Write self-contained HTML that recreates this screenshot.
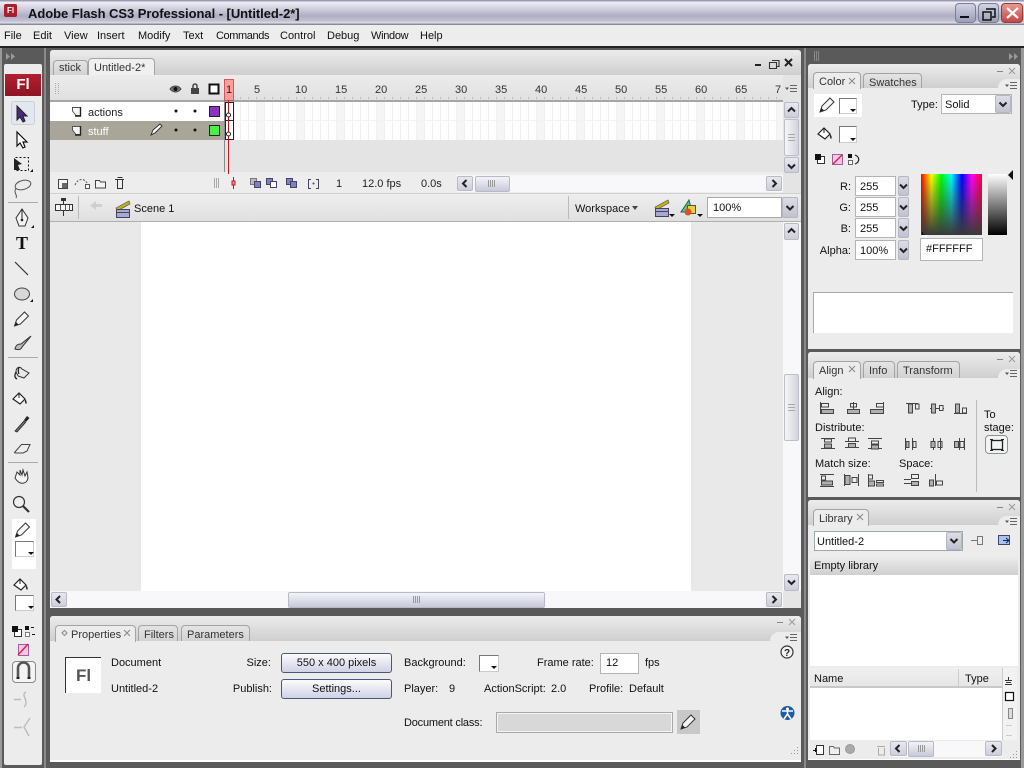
<!DOCTYPE html>
<html><head><meta charset="utf-8"><title>Adobe Flash CS3 Professional</title>
<style>
html,body{margin:0;padding:0;background:#5a5a5a;width:1024px;height:768px;overflow:hidden}
body{position:relative;font:11px "Liberation Sans",sans-serif;color:#111}
div{position:absolute;box-sizing:border-box}
.t{position:absolute;white-space:nowrap;line-height:14px;height:14px;margin-top:1px}
.r{text-align:right}
.pn{background:#ececec}
.hd{background:linear-gradient(#ececec,#cfcfcf)}
.tab{border:1px solid #a4a4a4;border-bottom:0;border-radius:4px 4px 0 0;background:linear-gradient(#e4e4e4,#d2d2d2);line-height:18px;padding-left:5px;white-space:nowrap;color:#333}
.tab.a{background:#ececec;color:#333}
.in{background:#fff;border:1px solid #b4b4b4}
.dd{background:linear-gradient(#dcdde6,#c0c2d0);border:1px solid #b4b6c2;border-radius:2px}
.sw{background:#fff;border-top:1px solid #777;border-left:1px solid #777;border-right:1px solid #ccc;border-bottom:1px solid #ccc}
.btn{background:linear-gradient(#fbfbfe,#cfd2e4);border:1px solid #47597a;border-radius:3px;text-align:center;line-height:18px}
.sb{background:linear-gradient(#e8e8f0,#ccced9);border:1px solid #b8bac6;border-radius:2px}
.th{background:linear-gradient(#f4f4f8,#c6c9d8);border:1px solid #b8bac8;border-radius:2px}
.tv{background:linear-gradient(90deg,#f6f6f9,#d2d4de);border:1px solid #bcbec9;border-radius:2px}
.tr{background:#f8f8fb}
svg{position:absolute;left:0;top:0}
</style></head><body>

<!-- title & menu -->
<div style="left:0;top:0;width:1024px;height:25px;background:linear-gradient(#9a9ab2 0,#9a9ab2 1px,#eeeef4 2px,#dcdce6 6px,#aeaec4 16px,#c2c2d2 21px,#e0e0ea 23px,#8a8a96 24px)"></div>
<div style="left:4px;top:4px;width:13px;height:13px;background:#a8202c;border-radius:2px;color:#fff;font:bold 8px/13px 'Liberation Sans',sans-serif;text-align:center">Fl</div>
<span class="t" style="left:28px;top:6px;font:bold 13px/14px 'Liberation Sans',sans-serif;letter-spacing:-.05px;color:#111">Adobe Flash CS3 Professional - [Untitled-2*]</span>
<div style="left:0;top:25px;width:1024px;height:21px;background:#ededed"></div>
<div style="left:0;top:46px;width:1024px;height:2px;background:#222"></div>
<span class="t" style="left:4px;top:28px">File</span>
<span class="t" style="left:33px;top:28px">Edit</span>
<span class="t" style="left:64px;top:28px">View</span>
<span class="t" style="left:97px;top:28px">Insert</span>
<span class="t" style="left:138px;top:28px">Modify</span>
<span class="t" style="left:183px;top:28px">Text</span>
<span class="t" style="left:216px;top:28px;letter-spacing:-.4px">Commands</span>
<span class="t" style="left:280px;top:28px">Control</span>
<span class="t" style="left:327px;top:28px">Debug</span>
<span class="t" style="left:371px;top:28px;letter-spacing:-.3px">Window</span>
<span class="t" style="left:420px;top:28px">Help</span>

<!-- window buttons -->
<div style="left:955px;top:3px;width:21px;height:20px;border:1px solid #7a7e98;border-radius:4px;background:linear-gradient(#d0d3e2,#9a9eb8)"></div>
<div style="left:978px;top:3px;width:21px;height:20px;border:1px solid #7a7e98;border-radius:4px;background:linear-gradient(#d0d3e2,#9a9eb8)"></div>
<div style="left:1001px;top:3px;width:22px;height:20px;border:1px solid #8a4040;border-radius:4px;background:linear-gradient(#e89a90,#c04848)"></div>

<!-- left dark strips -->
<div style="left:0;top:48px;width:2px;height:720px;background:#9a9a9a"></div>
<div style="left:44px;top:48px;width:2px;height:720px;background:#8a8a8a"></div>
<div style="left:804px;top:48px;width:2px;height:720px;background:#8a8a8a"></div>
<div style="left:1021px;top:48px;width:3px;height:720px;background:#9a9a9a"></div>

<!-- tools panel -->
<div style="left:4px;top:64px;width:38px;height:701px;background:#ececec;border-radius:2px"></div>
<div style="left:5px;top:74px;width:36px;height:22px;background:linear-gradient(#b3202f,#8e1424);color:#fff;font:bold 15px/22px 'Liberation Sans',sans-serif;text-align:center">Fl</div>
<div style="left:11px;top:101px;width:24px;height:24px;background:#e2e8f0;border:1px solid #c6d0dc;border-radius:3px"></div>
<div style="left:8px;top:202px;width:30px;height:1px;background:#aaa"></div>
<div style="left:8px;top:357px;width:30px;height:1px;background:#aaa"></div>
<div style="left:8px;top:462px;width:30px;height:1px;background:#aaa"></div>
<div style="left:12px;top:519px;width:24px;height:50px;background:#fff"></div>
<div class="sw" style="left:15px;top:541px;width:19px;height:16px"></div>
<div class="sw" style="left:15px;top:595px;width:19px;height:16px"></div>
<div style="left:12px;top:661px;width:24px;height:22px;border:1px solid #8a8a8a;border-radius:4px;background:#f4f4f4"></div>

<!-- timeline panel -->
<div style="left:50px;top:50px;width:751px;height:558px;background:#e4e4e4;border-radius:3px 3px 0 0"></div>
<div class="hd" style="left:50px;top:50px;width:751px;height:25px;border-radius:3px 3px 0 0"></div>
<div class="tab" style="left:53px;top:60px;width:35px;height:15px;line-height:15px">stick</div>
<div class="tab a" style="left:88px;top:58px;width:67px;height:18px;background:#f0f0f0;line-height:19px">Untitled-2*</div>
<div style="left:50px;top:75px;width:733px;height:25px;background:linear-gradient(#ececec,#e0e0e0)"></div>
<div style="left:50px;top:100px;width:733px;height:2px;background:#a6a6a6"></div>
<div style="left:50px;top:102px;width:174px;height:19px;background:#fff"></div>
<div style="left:50px;top:121px;width:174px;height:19px;background:#a9a699"></div>
<span class="t" style="left:88px;top:105px;color:#222">actions</span>
<span class="t" style="left:88px;top:124px;color:#fff">stuff</span>
<div style="left:233px;top:102px;width:550px;height:38px;background:repeating-linear-gradient(90deg,#f5f5f5 0,#f5f5f5 8px,#fff 8px,#fff 40px) 24px 0;"></div>
<div style="left:233px;top:102px;width:550px;height:38px;background:repeating-linear-gradient(90deg,transparent 0,transparent 7px,#f0f0f0 7px,#f0f0f0 8px)"></div>
<div style="left:233px;top:120px;width:550px;height:1px;background:#f2f2f2"></div>
<div style="left:233px;top:97px;width:550px;height:2px;background:repeating-linear-gradient(90deg,transparent 0,transparent 7px,#bdbdbd 7px,#bdbdbd 8px)"></div>
<div style="left:225px;top:102px;width:9px;height:19px;border:1px solid #222;background:#fff"></div>
<div style="left:225px;top:120px;width:9px;height:20px;border:1px solid #222;background:#fff"></div>
<div style="left:224px;top:100px;width:1px;height:93px;background:#8a8a8a"></div>
<div style="left:50px;top:172px;width:733px;height:21px;background:#ededed"></div>
<div style="left:224px;top:79px;width:10px;height:22px;background:#ff9c9c;border:1px solid #d05858;color:#222;text-align:center;line-height:21px;font-size:11px">1</div>
<div style="left:228px;top:100px;width:1px;height:74px;background:#c01820"></div>
<span class="t" style="left:254px;top:82px;color:#333">5</span>
<span class="t" style="left:295px;top:82px;color:#333">10</span>
<span class="t" style="left:335px;top:82px;color:#333">15</span>
<span class="t" style="left:375px;top:82px;color:#333">20</span>
<span class="t" style="left:415px;top:82px;color:#333">25</span>
<span class="t" style="left:455px;top:82px;color:#333">30</span>
<span class="t" style="left:495px;top:82px;color:#333">35</span>
<span class="t" style="left:535px;top:82px;color:#333">40</span>
<span class="t" style="left:575px;top:82px;color:#333">45</span>
<span class="t" style="left:615px;top:82px;color:#333">50</span>
<span class="t" style="left:655px;top:82px;color:#333">55</span>
<span class="t" style="left:695px;top:82px;color:#333">60</span>
<span class="t" style="left:735px;top:82px;color:#333">65</span>
<span class="t" style="left:775px;top:82px;color:#333">7</span>
<span class="t" style="left:336px;top:176px;color:#222">1</span>
<span class="t" style="left:362px;top:176px;color:#222">12.0 fps</span>
<span class="t" style="left:421px;top:176px;color:#222">0.0s</span>

<!-- timeline scrollbars -->
<div class="tr" style="left:783px;top:100px;width:17px;height:73px;background:#e5e5e5"></div>
<div class="sb" style="left:784px;top:102px;width:15px;height:16px"></div>
<div class="tv" style="left:784px;top:119px;width:15px;height:37px"></div>
<div class="sb" style="left:784px;top:157px;width:15px;height:16px"></div>
<div class="tr" style="left:457px;top:175px;width:326px;height:17px"></div>
<div class="sb" style="left:457px;top:176px;width:16px;height:15px"></div>
<div class="th" style="left:475px;top:176px;width:35px;height:16px"></div>
<div class="sb" style="left:766px;top:176px;width:16px;height:15px"></div>

<!-- edit bar -->
<div style="left:50px;top:193px;width:751px;height:29px;background:linear-gradient(#eeeeee,#e0e0e0);border-bottom:1px solid #b0b0b0;border-top:1px solid #d0d0d0"></div>
<div style="left:78px;top:196px;width:1px;height:23px;background:#bbb"></div>
<div style="left:568px;top:196px;width:1px;height:23px;background:#bbb"></div>
<span class="t" style="left:134px;top:201px">Scene 1</span>
<span class="t" style="left:575px;top:201px">Workspace</span>
<div class="in" style="left:707px;top:197px;width:75px;height:21px;border-color:#aaa"></div>
<span class="t" style="left:713px;top:200px">100%</span>
<div class="dd" style="left:782px;top:197px;width:16px;height:21px"></div>

<!-- stage -->
<div style="left:50px;top:222px;width:733px;height:369px;background:#e9e9e9"></div>
<div style="left:141px;top:222px;width:550px;height:369px;background:#fff"></div>
<div class="tr" style="left:783px;top:222px;width:18px;height:369px"></div>
<div class="sb" style="left:784px;top:223px;width:15px;height:17px"></div>
<div class="tv" style="left:784px;top:374px;width:15px;height:67px"></div>
<div class="sb" style="left:784px;top:574px;width:15px;height:17px"></div>
<div class="tr" style="left:50px;top:591px;width:733px;height:17px"></div>
<div style="left:783px;top:591px;width:18px;height:17px;background:#e5e5e5"></div>
<div class="sb" style="left:51px;top:592px;width:16px;height:15px"></div>
<div class="th" style="left:288px;top:592px;width:257px;height:16px"></div>
<div class="sb" style="left:766px;top:592px;width:16px;height:15px"></div>

<!-- properties -->
<div class="pn" style="left:50px;top:616px;width:751px;height:146px;border-radius:3px 3px 0 0;border-bottom:2px solid #fff"></div>
<div class="hd" style="left:50px;top:616px;width:751px;height:25px;border-radius:3px 3px 0 0"></div>
<div style="left:770px;top:632px;width:31px;height:9px;background:#ececec;border-radius:9px 0 0 0"></div>
<div class="tab a" style="left:55px;top:625px;width:81px;height:17px;padding-left:15px">Properties</div>
<div class="tab" style="left:138px;top:625px;width:40px;height:16px">Filters</div>
<div class="tab" style="left:181px;top:625px;width:69px;height:16px">Parameters</div>
<div style="left:65px;top:657px;width:36px;height:36px;background:#fff;border-top:1px solid #333;border-left:1px solid #333;color:#555;font:bold 17px/36px 'Liberation Sans',sans-serif;text-align:center">Fl</div>
<span class="t" style="left:111px;top:655px">Document</span>
<span class="t" style="left:111px;top:681px">Untitled-2</span>
<span class="t r" style="left:211px;width:60px;top:655px">Size:</span>
<span class="t r" style="left:211px;width:61px;top:681px">Publish:</span>
<div class="btn" style="left:281px;top:653px;width:111px;height:20px">550 x 400 pixels</div>
<div class="btn" style="left:281px;top:679px;width:111px;height:20px">Settings...</div>
<span class="t" style="left:404px;top:655px">Background:</span>
<div class="sw" style="left:479px;top:655px;width:20px;height:17px"></div>
<span class="t" style="left:537px;top:655px">Frame rate:</span>
<div class="in" style="left:600px;top:653px;width:39px;height:21px"></div>
<span class="t" style="left:606px;top:655px">12</span>
<span class="t" style="left:645px;top:655px">fps</span>
<span class="t" style="left:404px;top:681px">Player:</span>
<span class="t" style="left:449px;top:681px">9</span>
<span class="t" style="left:484px;top:681px">ActionScript:</span>
<span class="t" style="left:551px;top:681px">2.0</span>
<span class="t" style="left:589px;top:681px">Profile:</span>
<span class="t" style="left:629px;top:681px">Default</span>
<span class="t" style="left:404px;top:715px;letter-spacing:-.2px">Document class:</span>
<div style="left:496px;top:712px;width:177px;height:21px;background:#d8d8d8;border:1px solid #a8a8a8;box-shadow:inset 0 0 0 1px #f4f4f4"></div>
<div style="left:677px;top:710px;width:23px;height:24px;background:#c8c8c8"></div>

<!-- right column -->
<!-- color -->
<div class="pn" style="left:808px;top:64px;width:212px;height:285px;border-radius:3px 3px 0 0"></div>
<div class="hd" style="left:808px;top:64px;width:212px;height:24px;border-radius:3px 3px 0 0"></div>
<div style="left:998px;top:79px;width:22px;height:9px;background:#ececec;border-radius:9px 0 0 0"></div>
<div class="tab a" style="left:813px;top:72px;width:48px;height:17px;line-height:19px">Color</div>
<div class="tab" style="left:863px;top:73px;width:59px;height:15px">Swatches</div>
<div style="left:814px;top:94px;width:48px;height:23px;background:#fff"></div>
<div class="sw" style="left:839px;top:98px;width:18px;height:16px"></div>
<div class="sw" style="left:839px;top:126px;width:18px;height:17px"></div>
<span class="t" style="left:911px;top:97px">Type:</span>
<div class="in" style="left:941px;top:94px;width:71px;height:20px"></div>
<span class="t" style="left:945px;top:97px">Solid</span>
<div class="dd" style="left:995px;top:95px;width:16px;height:18px"></div>
<span class="t r" style="left:821px;width:30px;top:179px">R:</span>
<span class="t r" style="left:821px;width:30px;top:200px">G:</span>
<span class="t r" style="left:821px;width:30px;top:221px">B:</span>
<span class="t r" style="left:811px;width:40px;top:243px">Alpha:</span>
<div class="in" style="left:855px;top:176px;width:41px;height:20px"></div>
<div class="in" style="left:855px;top:197px;width:41px;height:20px"></div>
<div class="in" style="left:855px;top:218px;width:41px;height:20px"></div>
<div class="in" style="left:855px;top:240px;width:41px;height:20px"></div>
<span class="t" style="left:860px;top:179px">255</span>
<span class="t" style="left:860px;top:200px">255</span>
<span class="t" style="left:860px;top:221px">255</span>
<span class="t" style="left:860px;top:243px">100%</span>
<div class="dd" style="left:898px;top:176px;width:11px;height:20px"></div>
<div class="dd" style="left:898px;top:197px;width:11px;height:20px"></div>
<div class="dd" style="left:898px;top:218px;width:11px;height:20px"></div>
<div class="dd" style="left:898px;top:240px;width:11px;height:20px"></div>
<div style="left:921px;top:174px;width:61px;height:61px;background:linear-gradient(transparent,#3a3a3a),linear-gradient(90deg,#f00,#ff0 17%,#0f0 33%,#0ff 50%,#00f 67%,#f0f 83%,#f03)"></div>
<div style="left:988px;top:174px;width:19px;height:61px;background:linear-gradient(#fff,#000)"></div>
<div class="in" style="left:920px;top:238px;width:63px;height:23px"></div>
<span class="t" style="left:926px;top:241px">#FFFFFF</span>
<div style="left:813px;top:292px;width:200px;height:41px;background:#fff;border-top:1px solid #aaa;border-left:1px solid #aaa"></div>

<!-- align -->
<div class="pn" style="left:808px;top:352px;width:212px;height:145px;border-radius:3px 3px 0 0"></div>
<div class="hd" style="left:808px;top:352px;width:212px;height:26px;border-radius:3px 3px 0 0"></div>
<div style="left:998px;top:369px;width:22px;height:9px;background:#ececec;border-radius:9px 0 0 0"></div>
<div class="tab a" style="left:813px;top:361px;width:48px;height:18px;line-height:19px">Align</div>
<div class="tab" style="left:863px;top:361px;width:32px;height:17px;line-height:19px">Info</div>
<div class="tab" style="left:897px;top:361px;width:63px;height:17px;line-height:19px">Transform</div>
<span class="t" style="left:815px;top:384px">Align:</span>
<span class="t" style="left:815px;top:420px">Distribute:</span>
<span class="t" style="left:815px;top:456px">Match size:</span>
<span class="t" style="left:899px;top:456px">Space:</span>
<span class="t" style="left:984px;top:407px">To</span>
<span class="t" style="left:984px;top:420px">stage:</span>
<div style="left:976px;top:400px;width:1px;height:92px;background:#bbb"></div>
<div style="left:985px;top:435px;width:23px;height:19px;background:#f4f4f4;border:1px solid #8a8f9c;border-radius:4px"></div>

<!-- library -->
<div class="pn" style="left:808px;top:500px;width:212px;height:260px;border-radius:3px 3px 0 0;border-bottom:1px solid #fff"></div>
<div class="hd" style="left:808px;top:500px;width:212px;height:25px;border-radius:3px 3px 0 0"></div>
<div style="left:998px;top:516px;width:22px;height:9px;background:#ececec;border-radius:9px 0 0 0"></div>
<div class="tab a" style="left:813px;top:509px;width:56px;height:17px">Library</div>
<div class="in" style="left:814px;top:531px;width:149px;height:20px;border-color:#9aa"></div>
<span class="t" style="left:817px;top:534px">Untitled-2</span>
<div class="dd" style="left:946px;top:532px;width:16px;height:18px"></div>
<div style="left:810px;top:555px;width:208px;height:20px;background:linear-gradient(#efefef,#cfcfcf)"></div>
<span class="t" style="left:814px;top:558px">Empty library</span>
<div style="left:810px;top:575px;width:208px;height:91px;background:#fff"></div>
<div style="left:810px;top:668px;width:192px;height:20px;background:linear-gradient(#f0f0f0,#e6e6e6);border-bottom:2px solid #c8c8c8"></div>
<span class="t" style="left:814px;top:671px">Name</span>
<div style="left:958px;top:669px;width:1px;height:17px;background:#ccc"></div>
<span class="t" style="left:965px;top:671px">Type</span>
<div style="left:810px;top:688px;width:192px;height:52px;background:#fff"></div>
<div style="left:1002px;top:668px;width:15px;height:72px;background:#f2f2f2;border-left:1px solid #ccc"></div>
<div class="tr" style="left:890px;top:741px;width:112px;height:16px"></div>
<div class="sb" style="left:890px;top:741px;width:17px;height:15px"></div>
<div class="th" style="left:908px;top:741px;width:26px;height:16px"></div>
<div class="sb" style="left:985px;top:741px;width:17px;height:15px"></div>

<!-- all icons -->
<svg width="1024" height="768" viewBox="0 0 1024 768">
<defs>
<path id="cd" d="M-3.5 -1.5 L0 2 L3.5 -1.5" fill="none" stroke="#222" stroke-width="2"/>
<path id="cu" d="M-3.5 1.5 L0 -2 L3.5 1.5" fill="none" stroke="#222" stroke-width="2"/>
<path id="cl" d="M1.5 -3.5 L-2 0 L1.5 3.5" fill="none" stroke="#222" stroke-width="2"/>
<path id="cr" d="M-1.5 -3.5 L2 0 L-1.5 3.5" fill="none" stroke="#222" stroke-width="2"/>
<path id="tri" d="M-3 -1 H3 L0 2Z" fill="#111"/>
<g id="pen"><path d="M-7 7 L-5 1 L3 -7 L7 -3 L-1 5Z" fill="#f4f4f4" stroke="#333"/><path d="M-7 7 L-5.500 3 L-3 5.500Z" fill="#222"/></g>
<g id="bucket"><path d="M-7 0 L-1 -6 L5 0 L0 5Z" fill="#fff" stroke="#222" stroke-width="1.2"/><path d="M-1 -6 L-1 -1" stroke="#222"/><path d="M5 0 C7 2 7 4 6 5 C5 4 4.5 2 5 0Z" fill="#222"/></g>
<g id="menu"><path d="M0 .5h7M0 3.500h7M0 6.500h7" stroke="#666"/><path d="M-5 2.500h4l-2 2.500z" fill="#555"/></g>
</defs>

<!-- window glyphs -->
<path d="M960 17h9" stroke="#111" stroke-width="2"/>
<path d="M986 9h9v8h-3M983 12h8v8h-8z" fill="none" stroke="#111" stroke-width="1.5"/>
<path d="M1007 8 L1018 18M1018 8 L1007 18" stroke="#fff" stroke-width="2.2"/>

<!-- dark bar grips -->
<path d="M6 53 l4 3.500 -4 3.500zM11 53 l4 3.500 -4 3.500z" fill="#999"/>
<path d="M1009 53 l4 3.500 -4 3.500zM1014 53 l4 3.500 -4 3.500z" fill="#999"/>
<path d="M814.500 51v10M816.500 51v10M818.500 51v10" stroke="#888"/>

<!-- tools -->
<path d="M17 106 L17 120 L20 117 L23 122 L25 121 L23 116 L27 116Z" fill="#4a2a7a" stroke="#222"/>
<path d="M17 132 L17 146 L20 143 L23 148 L25 147 L23 142 L27 142Z" fill="#fff" stroke="#111" stroke-width="1.2"/>
<path d="M15.500 157.500h13v13h-13z" fill="none" stroke="#111" stroke-dasharray="2 2"/><path d="M14 158 L22 164 L18 165 L20 170 L14 170Z" fill="#222"/><path d="M30 172h3v-3z" fill="#111"/>
<ellipse cx="23" cy="185" rx="8" ry="4.500" fill="none" stroke="#555" stroke-width="1" transform="rotate(-15 23 185)"/><path d="M16 188 C13 193 18 195 16 198" fill="none" stroke="#555"/>
<path d="M22 209 L28 218 L25 226 H19 L16 218Z" fill="#f4f4f4" stroke="#333"/><path d="M22 209V220" stroke="#222"/><circle cx="22" cy="220" r="1.300" fill="#222"/><path d="M31 228h3v-3z" fill="#111"/>
<text x="22" y="249" font-family="Liberation Serif,serif" font-weight="bold" font-size="18" text-anchor="middle" fill="#111">T</text>
<path d="M15 262 L28 275" stroke="#333" stroke-width="1.200"/>
<ellipse cx="22" cy="294" rx="7.500" ry="6" fill="#d8d8d8" stroke="#444"/><path d="M30 302h3v-3z" fill="#111"/>
<use href="#pen" x="21.500" y="319"/>
<path d="M15 349 C16 344 19 344 21 344 L31 336 L22 347 C21 350 18 350 15 349Z" fill="#bbb" stroke="#333"/>
<path d="M16 372 C16 367 20 366 22 369 L29 373 L24 378 L18 376Z" fill="#e8e8e8" stroke="#333"/><path d="M16 372 C14 376 15 378 17 379 M19 367 C18 370 18 372 19 374" fill="none" stroke="#222" stroke-width="1.300"/>
<use href="#bucket" x="20" y="399"/>
<path d="M15 431 L24 421 L25.500 422.500 L17 432Z" fill="#777" stroke="#222" stroke-width=".8"/><path d="M24 420 L27 416 L29.500 418 L26 422Z" fill="#222"/>
<path d="M14.500 452.500 L21.500 444.500 H30 L27 451 L23 453 H15Z" fill="#eee" stroke="#444"/>
<path d="M15 478 L17 472 L20 475 L20 470 L22 475 L23 470 L25 476 L27 472 L28 478 C27 484 20 486 15 478Z" fill="#f4f4f4" stroke="#333"/>
<circle cx="19" cy="502" r="5.500" fill="#eee" stroke="#333" stroke-width="1.200"/><path d="M23 506 L29 512" stroke="#333" stroke-width="2.200"/>
<use href="#pen" x="22.500" y="530"/>
<use href="#tri" x="31" y="553"/>
<use href="#bucket" x="21" y="585"/>
<use href="#tri" x="31" y="607"/>
<rect x="14.500" y="629.500" width="7" height="7" fill="#fff" stroke="#333"/><rect x="12" y="626" width="6" height="6" fill="#111"/><rect x="25" y="626" width="4" height="4" fill="#111"/><rect x="25.500" y="632.500" width="4" height="4" fill="#fff" stroke="#333" stroke-width=".6"/><path d="M31 627.500h3M32 634.500h3" stroke="#111"/>
<rect x="18.500" y="644.500" width="10" height="11" fill="#f4c8e4" stroke="#a060a0"/><path d="M18 655 L28 644" stroke="#e02040" stroke-width="1.400"/>
<path d="M18 678 V668 A5.500 5.500 0 0 1 29 668 V678" fill="none" stroke="#555" stroke-width="2.600"/><path d="M16.500 678h3M27.500 678h3" stroke="#222" stroke-width="2"/>
<path d="M14 699.500h7M26 692 C20 695 30 701 24 707" fill="none" stroke="#bcbcbc" stroke-width="1.400"/>
<path d="M14 727.500h8M30 718 L24 727 L29 736" fill="none" stroke="#bcbcbc" stroke-width="1.400"/>

<!-- timeline header -->
<path d="M55.500 83v12M58.500 83v12" stroke="#aaa" stroke-dasharray="1 1"/>
<path d="M170 89 C173 85 178 85 181 89 C178 93 173 93 170 89Z" fill="#777" stroke="#444"/><circle cx="175.500" cy="89" r="2" fill="#111"/>
<rect x="191" y="88" width="8" height="6" fill="#444"/><path d="M193 88 V86 A2 2 0 0 1 197 86 V88" fill="none" stroke="#444" stroke-width="1.500"/>
<rect x="209.500" y="84.500" width="9" height="9" fill="#fff" stroke="#111" stroke-width="2"/>
<path d="M72.500 107.500 H80.500 V115.500 H76 L72.500 111Z" fill="#f8f8f8" stroke="#555"/><path d="M80.500 107V116H75" fill="none" stroke="#222" stroke-width="1.400"/>
<path d="M72.500 126.500 H80.500 V134.500 H76 L72.500 130Z" fill="#f8f8f8" stroke="#555"/><path d="M80.500 126V135H75" fill="none" stroke="#222" stroke-width="1.400"/>
<circle cx="176" cy="111" r="1.500" fill="#111"/><circle cx="195" cy="111" r="1.500" fill="#111"/>
<circle cx="176" cy="130" r="1.500" fill="#111"/><circle cx="195" cy="130" r="1.500" fill="#111"/>
<rect x="209.500" y="106.500" width="10" height="10" fill="#8a33c4" stroke="#222"/>
<rect x="209.500" y="125.500" width="10" height="10" fill="#48f048" stroke="#222"/>
<path d="M151 135 L153 130 L160 124 L162 126 L155 133Z" fill="#fff" stroke="#333"/>
<circle cx="228.500" cy="115" r="2" fill="#fff" stroke="#222"/>
<circle cx="228.500" cy="134" r="2" fill="#fff" stroke="#222"/>
<g transform="translate(790 85)"><use href="#menu"/></g>

<!-- timeline foot -->
<rect x="58.500" y="179.500" width="9" height="9" fill="#f4f4f4" stroke="#444"/><rect x="62" y="183" width="5" height="5" fill="#666"/>
<path d="M75 185 C78 178 84 178 87 183" fill="none" stroke="#555" stroke-dasharray="2 1.500"/><rect x="85.500" y="184.500" width="4" height="4" fill="#fff" stroke="#555"/>
<path d="M95.500 180.500h4l1 1.500h5v6h-10z" fill="#f4f4f4" stroke="#444"/>
<path d="M115 179.500h9M117.500 179.500v9h5v-9M117.500 177.500h5" fill="#eee" stroke="#333"/>
<path d="M214.500 178v10M216.500 178v10M218.500 178v10" stroke="#aaa"/>
<path d="M233.500 177v12" stroke="#c01820"/><rect x="232" y="181" width="3" height="4" fill="#f88" stroke="#c01820"/>
<rect x="250.500" y="178.500" width="6" height="6" fill="#bbb" stroke="#778"/><rect x="254.500" y="181.500" width="6" height="6" fill="#8080c0" stroke="#446"/>
<rect x="266.500" y="178.500" width="6" height="6" fill="#8080c0" stroke="#446"/><rect x="270.500" y="181.500" width="6" height="6" fill="#fff" stroke="#446"/>
<rect x="286.500" y="178.500" width="6" height="6" fill="#8080c0" stroke="#446"/><rect x="290.500" y="181.500" width="6" height="6" fill="#8080c0" stroke="#446"/>
<path d="M311 179.500h-2.500v9h2.500M316 179.500h2.500v9h-2.500" fill="none" stroke="#445"/><circle cx="313.500" cy="183.500" r="1" fill="#445"/>
<use href="#cu" x="791.500" y="110"/><use href="#cd" x="791.500" y="166"/>
<path d="M788 134.500h7M788 137.500h7M788 140.500h7" stroke="#aaa"/>
<use href="#cl" x="465" y="183.500"/><use href="#cr" x="774" y="183.500"/>
<path d="M488.500 180v7M490.500 180v7M492.500 180v7M494.500 180v7" stroke="#999"/>

<!-- corner buttons -->
<path d="M755 65h6" stroke="#222" stroke-width="2"/>
<path d="M772 60.500h7v6h-2M769.500 62.500h7v6h-7z" fill="none" stroke="#333" stroke-width="1.100"/>
<path d="M785 59 L792 66M792 59 L785 66" stroke="#222" stroke-width="2"/>

<!-- edit bar -->
<path d="M63.500 198v18" stroke="#333"/><rect x="61" y="198" width="5" height="3" fill="#333"/>
<rect x="55.500" y="204.500" width="17" height="6" fill="#f4f4f4" stroke="#333"/><path d="M60.500 205v6M65.500 205v6M69.500 205v6" stroke="#555"/>
<path d="M96 201 L90 205.500 L96 210 V207 H102 V204 H96Z" fill="#cfcfcf"/>
<path d="M116 208 L129 201 L130 204 L117 211Z" fill="#c0b020" stroke="#555" stroke-width=".7"/><rect x="116.500" y="209.500" width="13" height="8" fill="#a6a8d6" stroke="#445"/><path d="M117 212.500h12" stroke="#446" />
<path d="M632 206h6l-3 4z" fill="#444"/>
<path d="M655 207 L668 200 L669 203 L656 210Z" fill="#c0b020" stroke="#555" stroke-width=".7"/><rect x="655.500" y="208.500" width="13" height="8" fill="#a6a8d6" stroke="#445"/><path d="M656 211.500h12" stroke="#446"/><use href="#tri" x="672" y="215"/>
<path d="M681 212 L689 200 L692 212Z" fill="#60c090" stroke="#264"/><rect x="687.500" y="205.500" width="8" height="8" fill="#e8d040" stroke="#553"/><circle cx="688" cy="212" r="3.500" fill="#e05020"/><use href="#tri" x="700" y="215"/>
<use href="#cd" x="790" y="207.500"/>

<!-- stage scroll -->
<use href="#cu" x="791.500" y="231"/><use href="#cd" x="791.500" y="582"/>
<path d="M788 404.500h7M788 407.500h7M788 410.500h7" stroke="#aaa"/>
<use href="#cl" x="58.500" y="599.500"/><use href="#cr" x="774" y="599.500"/>
<path d="M413.500 596v7M415.500 596v7M417.500 596v7M419.500 596v7" stroke="#999"/>

<!-- panel menus -->
<g transform="translate(790 634)"><use href="#menu"/></g><path d="M777 622.500h6" stroke="#888"/><path d="M789 619 L795 625M795 619 L789 625" stroke="#999"/>
<g transform="translate(1010 82)"><use href="#menu"/></g><path d="M997 71.500h6" stroke="#888"/><path d="M1009 68 L1015 74M1015 68 L1009 74" stroke="#999"/>
<g transform="translate(1010 370)"><use href="#menu"/></g><path d="M997 359.500h6" stroke="#888"/><path d="M1009 356 L1015 362M1015 356 L1009 362" stroke="#999"/>
<g transform="translate(1010 518)"><use href="#menu"/></g><path d="M997 507.500h6" stroke="#888"/><path d="M1009 504 L1015 510M1015 504 L1009 510" stroke="#999"/>
<path d="M849 78 L855 84M855 78 L849 84" stroke="#888"/>
<path d="M849 366 L855 372M855 366 L849 372" stroke="#888"/>
<path d="M857 514 L863 520M863 514 L857 520" stroke="#888"/>
<path d="M124 630 L130 636M130 630 L124 636" stroke="#888"/>
<path d="M62 633 l2.500 -2.500 2.500 2.500 -2.500 2.500z" fill="none" stroke="#888"/>

<!-- properties -->
<use href="#tri" x="494" y="667"/>
<circle cx="787" cy="652" r="6" fill="#f4f4f4" stroke="#333" stroke-width="1.200"/><text x="787" y="656" font-size="10" font-weight="bold" font-family="Liberation Sans,sans-serif" text-anchor="middle" fill="#222">?</text>
<circle cx="787.500" cy="713" r="7" fill="#1a5ea8"/><circle cx="787.500" cy="709" r="1.500" fill="#fff"/><path d="M782 711 H793 M787.500 711 V714 L784 719 M787.500 714 L791 719" stroke="#fff" stroke-width="1.600" fill="none"/>
<use href="#pen" x="688" y="722"/>
<path d="M797 747.500h1M794 750.500h1M797 750.500h1M791 753.500h1M794 753.500h1M797 753.500h1" stroke="#999"/>

<!-- color panel -->
<use href="#pen" x="827" y="105"/>
<use href="#tri" x="853" y="110"/>
<use href="#bucket" x="825" y="134"/>
<use href="#tri" x="853" y="139"/>
<rect x="817.500" y="156.500" width="7" height="7" fill="#fff" stroke="#333"/><rect x="815" y="154" width="6" height="6" fill="#111"/>
<rect x="832.500" y="154.500" width="10" height="10" fill="#f4c8e4" stroke="#a060a0"/><path d="M833 164 L842 155" stroke="#e02040" stroke-width="1.300"/>
<rect x="848" y="154" width="4" height="4" fill="#111"/><rect x="848.500" y="160.500" width="4" height="4" fill="#fff" stroke="#333" stroke-width=".7"/><path d="M855 155 C860 157 860 162 855 164" fill="none" stroke="#222" stroke-width="1.200"/>
<use href="#cd" x="1003" y="104"/>
<use href="#cd" x="903.500" y="186"/><use href="#cd" x="903.500" y="207"/><use href="#cd" x="903.500" y="228"/><use href="#cd" x="903.500" y="250"/>
<path d="M1013 170 V180 L1008 175Z" fill="#111"/>
<path d="M922.500 232v3h3" stroke="#111" fill="none"/><rect x="922" y="235" width="5" height="2" fill="#fff"/>

<!-- align icons -->
<g fill="#b0b0b0" stroke="#444" stroke-width="1">
<path d="M820.500 402v12" fill="none"/><rect x="821.500" y="403.500" width="7" height="3.500" fill="none"/><rect x="821.500" y="409.500" width="12" height="4"/>
<path d="M853.500 402v12" fill="none"/><rect x="850.500" y="403.500" width="6" height="3.500" fill="none"/><rect x="847.500" y="409.500" width="12" height="4"/>
<path d="M883.500 402v12" fill="none"/><rect x="876.500" y="403.500" width="7" height="3.500" fill="none"/><rect x="870.500" y="409.500" width="13" height="4"/>
<path d="M906 403.500h12" fill="none"/><rect x="908.500" y="404" width="4" height="9"/><rect x="915.500" y="404" width="3.500" height="5" fill="none"/>
<path d="M930 408.500h14" fill="none"/><rect x="931.500" y="404" width="4" height="9"/><rect x="939.500" y="405.500" width="3.500" height="5" fill="#eee"/>
<path d="M954 413.500h13" fill="none"/><rect x="955.500" y="404" width="4" height="9"/><rect x="962.500" y="408" width="4" height="5" fill="#eee"/>
<path d="M821 438.500h14M821 448.500h14" fill="none"/><rect x="824.500" y="439" width="7" height="3" fill="none"/><rect x="824.500" y="444" width="7" height="4"/>
<path d="M845 441.500h14M845 447.500h14" fill="none"/><rect x="848.500" y="438" width="7" height="3.500" fill="none"/><rect x="848.500" y="443.500" width="7" height="4"/>
<path d="M868 438.500h14M868 448.500h14" fill="none"/><rect x="871.500" y="441" width="7" height="3" fill="none"/><rect x="871.500" y="445" width="7" height="4"/>
<path d="M905.500 438v12M912.500 438v12" fill="none"/><rect x="906" y="441.500" width="3" height="6"/><rect x="913" y="441.500" width="3" height="6" fill="none"/>
<path d="M933.500 438v12M940.500 438v12" fill="none"/><rect x="931" y="441.500" width="4" height="6"/><rect x="938" y="441.500" width="4" height="6" fill="none"/>
<path d="M959.500 438v12M964.500 438v12" fill="none"/><rect x="954.500" y="441.500" width="4" height="6"/><rect x="960" y="441.500" width="4" height="6" fill="none"/>
<path d="M820 474.500h14M820 486.500h14" fill="none"/><rect x="821.500" y="476" width="4" height="4" fill="none"/><rect x="821.500" y="481" width="11" height="4"/>
<path d="M844.500 474v12M858.500 474v12" fill="none"/><rect x="845" y="475.500" width="5" height="9"/><rect x="852" y="477.500" width="5" height="5" fill="none"/>
<path d="M868.500 474v13" fill="none"/><rect x="868.500" y="475" width="4" height="4" fill="none"/><rect x="868.500" y="481" width="6" height="5"/><rect x="876.500" y="480.500" width="7" height="2" fill="none"/><rect x="876.500" y="484" width="7" height="2" fill="none"/>
<path d="M904 479.500h7M904 483.500h7" fill="none"/><rect x="911.500" y="474.500" width="7" height="4" fill="none"/><rect x="911.500" y="481.500" width="7" height="4"/>
<path d="M935.500 474v12" fill="none"/><rect x="929.500" y="480" width="4" height="6"/><rect x="936.500" y="481" width="6" height="4" fill="none"/>
</g>
<rect x="991.500" y="440.500" width="11" height="9" fill="none" stroke="#222" stroke-width="1.300"/><path d="M990 439.500h3M1001 439.500h3M990 450.500h3M1001 450.500h3" stroke="#222"/>

<!-- library icons -->
<use href="#cd" x="954" y="540.500"/>
<path d="M971 540.500h6M977.500 536.500v8h5v-8z" fill="none" stroke="#777"/>
<rect x="998.500" y="535.500" width="11" height="9" fill="#a8c4ec" stroke="#446"/><path d="M1003 540.500h5M1006 538 l3 2.500 -3 2.500" stroke="#125" fill="none"/>
<path d="M1005 680.500h7M1006 682.500h5M1005 684.500h7M1008.500 677v3" stroke="#333"/>
<rect x="1005.500" y="692.500" width="8" height="8" fill="#fff" stroke="#111" stroke-width="1.200"/>
<rect x="1008.500" y="708.500" width="4" height="10" fill="#ddd" stroke="#888"/>
<path d="M1006 725.500h6M1006 735.500h6" stroke="#ccc"/>
<rect x="816.500" y="745.500" width="7" height="9" fill="#fff" stroke="#333"/><path d="M813 750.500h4M815.500 748v4" stroke="#111"/>
<path d="M829.500 746.500h4l1 1.500h5v6.500h-10z" fill="#eee" stroke="#666"/>
<circle cx="850" cy="749" r="4.500" fill="#aaa" stroke="#999"/>
<path d="M877 746.500h8M878.500 748v7h6v-7" fill="none" stroke="#aaa"/>
<use href="#cl" x="898" y="748.500"/><use href="#cr" x="993.500" y="748.500"/>
<path d="M918.500 745v7M920.500 745v7M922.500 745v7M924.500 745v7" stroke="#999"/>
<path d="M1016 751.500h1M1013 754.500h1M1016 754.500h1M1010 757.500h1M1013 757.500h1M1016 757.500h1" stroke="#999"/>
</svg>
</body></html>
